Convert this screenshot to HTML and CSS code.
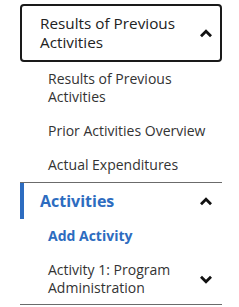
FILE: index.html
```html
<!DOCTYPE html>
<html>
<head>
<meta charset="utf-8">
<link rel="stylesheet" href="styles.css">
</head>
<body>
<nav class="sidenav">
  <div class="group-head boxed">
    <span class="group-title">Results of Previous Activities</span>
    <svg class="chev" width="14" height="9" viewBox="0 0 14 9"><polyline points="2,7.3 7,2.3 12,7.3" fill="none" stroke="#111" stroke-width="2.8"/></svg>
  </div>
  <ul class="items">
    <li class="item">Results of Previous Activities</li>
    <li class="item">Prior Activities Overview</li>
    <li class="item">Actual Expenditures</li>
  </ul>
  <div class="section">
    <div class="group-head active">
      <span class="group-title">Activities</span>
      <svg class="chev" width="14" height="9" viewBox="0 0 14 9"><polyline points="2,7.3 7,2.3 12,7.3" fill="none" stroke="#111" stroke-width="2.8"/></svg>
    </div>
    <ul class="items">
      <li class="item current">Add Activity</li>
      <li class="item with-chev"><span>Activity 1: Program Administration</span>
        <svg class="chev" width="14" height="9" viewBox="0 0 14 9"><polyline points="2,1.7 7,6.7 12,1.7" fill="none" stroke="#111" stroke-width="2.8"/></svg>
      </li>
    </ul>
  </div>
</nav>
</body>
</html>
```

FILE: styles.css
```css
html, body {
  margin: 0;
  padding: 0;
  background: #fff;
}
body {
  font-family: "Open Sans", "Liberation Sans", sans-serif;
  color: #333;
}
.sidenav {
  margin: 4px 17px 0 20px;
  width: 202px;
}
.group-head {
  display: flex;
  align-items: center;
  justify-content: space-between;
  font-size: 16px;
  line-height: 19px;
  color: #222;
}
.boxed {
  font-size: 15.3px;
  border: 2px solid #1a1a1a;
  border-radius: 4px;
  padding: 8px 7px 8px 18px;
}
.group-title {
  flex: 1;
  padding-right: 8px;
}
.chev {
  flex: none;
  display: block;
}
.items {
  list-style: none;
  margin: 0;
  padding: 0;
}
.item {
  font-size: 14px;
  line-height: 18px;
  padding: 8px 9px 8px 28px;
  color: #333;
}
.with-chev {
  display: flex;
  align-items: center;
  justify-content: space-between;
  padding-bottom: 7px;
}
.with-chev span {
  flex: 1;
  padding-right: 12px;
}
.section {
  border-top: 1px solid #6b6b6b;
  border-bottom: 1px solid #6b6b6b;
}
.active {
  border-left: 4px solid #2d6cc0;
  padding: 8px 9px 8px 16px;
  line-height: 20px;
  font-weight: 700;
  color: #2d6cc0;
}
.current {
  font-weight: 700;
  color: #2d6cc0;
}
```
